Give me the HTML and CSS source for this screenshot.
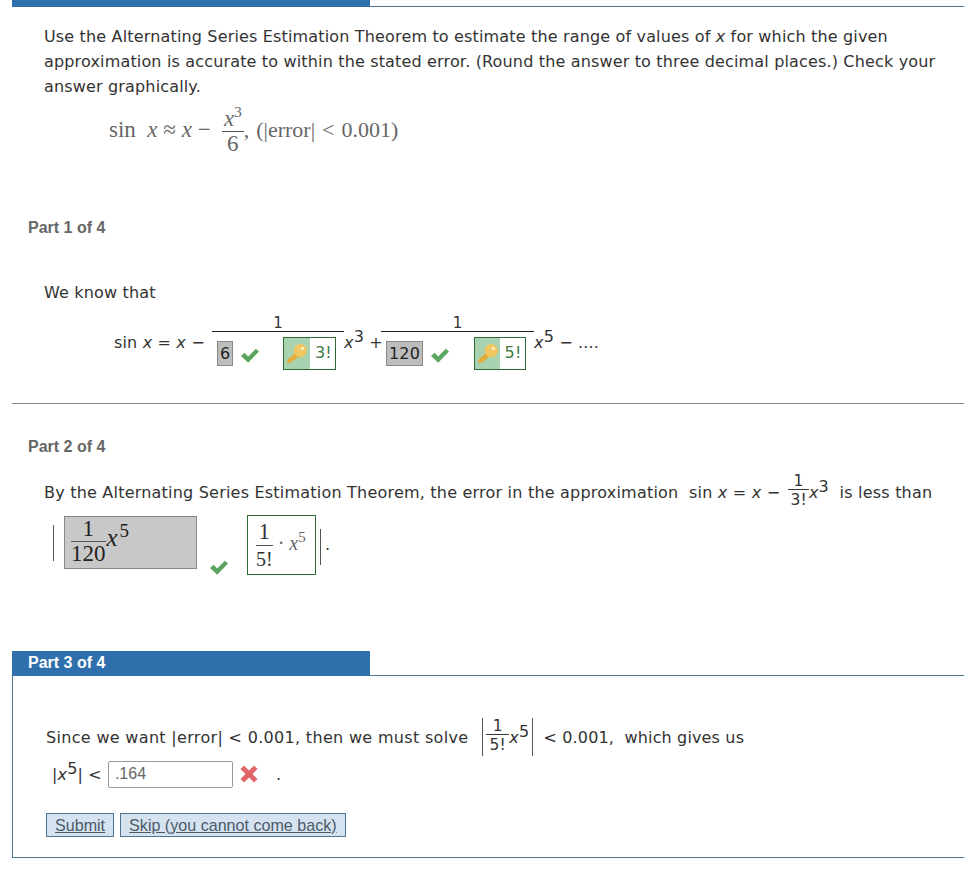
FILE: index.html
```html
<!DOCTYPE html>
<html lang="en">
<head>
<meta charset="utf-8">
<title>Alternating Series Estimation</title>
<link rel="stylesheet" href="styles.css">
</head>
<body>
<svg class="defs" width="0" height="0" aria-hidden="true">
  <defs>
    <symbol id="check" viewBox="0 0 20 16"><path d="M0 8.5 L4 5 L8 9 L16.5 0.5 L20 3.5 L8 16 Z" fill="#5ba55f"/></symbol>
    <symbol id="cross" viewBox="0 0 18 18"><path d="M0.5 4 L4 0.5 L9 5.5 L14 0.5 L17.5 4 L12.5 9 L17.5 14 L14 17.5 L9 12.5 L4 17.5 L0.5 14 L5.5 9 Z" fill="#e0656a"/></symbol>
    <symbol id="key" viewBox="0 0 20 20"><path d="M1 15.5 L9 8 L12.5 11.5 L6 17 L4.5 16.5 L3.5 18.5 L1.5 18.5 Z" fill="#e2ad3f"/><circle cx="13" cy="7" r="6" fill="#efc65f"/><circle cx="15" cy="5" r="1.6" fill="#fbeab5"/></symbol>
  </defs>
</svg>
<main class="page">
  <div class="tab-head slim"><div class="tab tab-slim"></div></div>

  <section class="question">
    <p class="prose">Use the Alternating Series Estimation Theorem to estimate the range of values of <i>x</i> for which the given approximation is accurate to within the stated error. (Round the answer to three decimal places.) Check your answer graphically.</p>
    <div class="tex-line">
      <span class="tex-lead">sin&nbsp; <i>x</i> ≈ <i>x</i> −</span>
      <span class="tex-frac"><span class="tex-num"><i>x</i><sup>3</sup></span><span class="tex-den">6</span></span>
      <span class="tex-tail">, (|error| &lt; 0.001)</span>
    </div>
  </section>

  <section class="part part-one">
    <h2 class="part-label">Part 1 of 4</h2>
    <p class="prose know">We know that</p>
    <div class="series">
      <span class="series-lead">sin <i>x</i> = <i>x</i> −</span>
      <span class="blank-frac first">
        <span class="blank-num">1</span>
        <span class="blank-den">
          <span class="given">6</span>
          <svg class="check"><use href="#check"/></svg>
          <span class="key-box"><span class="key-side"><svg class="key"><use href="#key"/></svg></span><span class="key-val">3!</span></span>
        </span>
      </span>
      <span class="series-term"><i>x</i><sup>3</sup> +</span>
      <span class="blank-frac second">
        <span class="blank-num">1</span>
        <span class="blank-den">
          <span class="given">120</span>
          <svg class="check"><use href="#check"/></svg>
          <span class="key-box"><span class="key-side"><svg class="key"><use href="#key"/></svg></span><span class="key-val">5!</span></span>
        </span>
      </span>
      <span class="series-term"><i>x</i><sup>5</sup> − ....</span>
    </div>
  </section>

  <section class="part part-two">
    <h2 class="part-label">Part 2 of 4</h2>
    <div class="prose error-line">
      <span>By the Alternating Series Estimation Theorem, the error in the approximation&nbsp; sin <i>x</i> = <i>x</i> −</span>
      <span class="mini-frac"><span class="mini-num">1</span><span class="mini-den">3!</span></span><span class="after-frac"><i>x</i><sup>3</sup>&nbsp; is less than</span>
    </div>
    <div class="abs-line">
      <span class="abs-bar"></span>
      <span class="given-tex">
        <span class="tex-frac big"><span class="tex-num">1</span><span class="tex-den">120</span></span><span class="tex-pow"><i>x</i><sup>5</sup></span>
      </span>
      <svg class="check check-low"><use href="#check"/></svg>
      <span class="answer-tex">
        <span class="tex-frac ans"><span class="tex-num">1</span><span class="tex-den">5!</span></span><span class="dot-pow">· <i>x</i><sup>5</sup></span>
      </span>
      <span class="abs-bar end"></span><span class="period">.</span>
    </div>
  </section>

  <div class="tab-head"><div class="tab">Part 3 of 4</div></div>
  <section class="active-part">
    <div class="prose solve-line">
      <span>Since we want |error| &lt; 0.001, then we must solve</span>
      <span class="abs-frac"><span class="mini-frac"><span class="mini-num">1</span><span class="mini-den">5!</span></span><span class="after-frac"><i>x</i><sup>5</sup></span></span>
      <span class="solve-tail">&lt; 0.001,&nbsp; which gives us</span>
    </div>
    <div class="prose input-line">
      <span>|<i>x</i><sup>5</sup>| &lt;</span>
      <input class="answer" type="text" value=".164" aria-label="answer">
      <svg class="cross"><use href="#cross"/></svg>
      <span class="input-dot">.</span>
    </div>
    <div class="actions">
      <button class="btn" type="button">Submit</button>
      <button class="btn" type="button">Skip (you cannot come back)</button>
    </div>
  </section>
</main>
</body>
</html>
```
FILE: styles.css
```css
* { box-sizing: border-box; }
html, body { margin: 0; padding: 0; background: #fff; overflow: hidden; }
body { font-family: "DejaVu Sans", Verdana, sans-serif; font-size: 16px; letter-spacing: 0.16px; color: #333; width: 964px; height: 870px; }
.defs { position: absolute; }
.page { padding-left: 12px; }
p { margin: 0; }

.tab-head { border-bottom: 1px solid #4f7590; height: 25px; }
.tab-head.slim { height: 7px; }
.tab { width: 358px; height: 25px; background: #2f6fab; color: #fff; font: bold 16px/24px "Liberation Sans", Arial, sans-serif; letter-spacing: 0; padding-left: 16px; }
.tab-slim { height: 7px; }

.question { padding: 17px 12px 0 32px; }
.prose { line-height: 25px; }
.tex-line { display: flex; align-items: center; margin: 5px 0 0 65px; font: 23px "Liberation Serif", serif; letter-spacing: 0; color: #666; height: 54px; }
.tex-lead { width: 113px; white-space: pre; word-spacing: 0; margin-top: -2px; }
.tex-tail { white-space: nowrap; font-size: 22px; word-spacing: 1.5px; margin-top: -2px; }
.tex-frac { display: inline-flex; flex-direction: column; align-items: center; vertical-align: middle; }
.tex-num { padding: 0 2px; line-height: 24px; }
.tex-num sup { font-size: 15px; line-height: 0; }
.tex-den { border-top: 1px solid #555; width: 100%; text-align: center; line-height: 24px; }

.part-label { margin: 0; font: bold 16px/20px "Liberation Sans", Arial, sans-serif; letter-spacing: 0; color: #666; padding-left: 16px; }
.part-one { margin-top: 60px; border-bottom: 1px solid #888; height: 186px; }
.know { padding-left: 32px; margin-top: 42px; }
.series { display: flex; align-items: flex-start; margin: 9px 0 0 102px; }
.series-lead { margin-top: 19px; width: 98px; white-space: nowrap; }
.series-term { margin-top: 19px; white-space: nowrap; }
.series sup, .after-frac sup, .input-line sup { font-size: 16px; line-height: 0; }
.blank-frac { display: flex; flex-direction: column; align-items: stretch; }
.blank-frac.first { width: 132px; }
.blank-frac.second { width: 153px; flex: none; }
.series-term:nth-of-type(3) { width: 37px; }
.blank-num { text-align: center; line-height: 18px; height: 18px; border-bottom: 1px solid #222; font-size: 15px; }
.blank-den { display: flex; align-items: flex-start; padding: 5px 0 0 5px; }
.given { margin-top: 4px; height: 25px; line-height: 23px; padding: 0 2px; border: 1px solid #888; background: #bdbdbd; color: #222; min-width: 16px; }
.check { width: 18px; height: 15px; margin-left: 8px; margin-top: 11px; flex: none; }
.key-box { display: flex; width: 53px; height: 33px; margin-left: 24px; border: 1px solid #2e6b34; color: #3f7a45; }
.key-side { width: 26px; background: #a9d3b0; display: flex; align-items: center; justify-content: center; }
.key { width: 22px; height: 22px; }
.key-val { flex: 1; text-align: center; line-height: 30px; padding-left: 1px; }
.second .key-box { width: 52px; margin-left: 25px; }
.second .key-side { width: 25px; }

.part-two { margin-top: 33px; }
.error-line { display: flex; align-items: center; margin: 13px 0 0 32px; height: 44px; white-space: nowrap; letter-spacing: 0.21px; }
.mini-frac { display: inline-flex; flex-direction: column; align-items: center; margin-left: 8px; font-size: 15.5px; vertical-align: middle; }
.mini-num { line-height: 15px; }
.mini-den { line-height: 20px; border-top: 1px solid #333; padding: 0 2px; }
.after-frac { white-space: nowrap; }
.abs-line { display: flex; align-items: flex-start; height: 60px; margin: 1px 0 0 41px; font-family: "Liberation Serif", serif; letter-spacing: 0; }
.abs-bar { width: 1px; height: 36px; background: #555; margin-top: 10px; }
.abs-bar.end { height: 36px; margin: 14px 0 0 4px; }
.given-tex { display: flex; width: 133px; height: 53px; margin: 1px 0 0 10px; padding: 0 0 0 6px; background: #c8c8c8; border: 1px solid #888; font-size: 23px; color: #222; }
.tex-frac.big .tex-num, .tex-frac.big .tex-den { line-height: 24px; }
.tex-pow { font-size: 25px; line-height: 30px; margin: 6px 0 0 1px; }
.tex-pow sup { font-size: 19px; line-height: 0; margin-left: 2px; }
.check-low { width: 18px; height: 15px; margin: 45px 0 0 13px; }
.answer-tex { display: flex; align-items: center; width: 69px; height: 60px; margin-left: 19px; padding-left: 8px; border: 1px solid #2e6b34; font-size: 20px; color: #333; }
.tex-frac.ans .tex-num { font-size: 23px; line-height: 27px; }
.tex-frac.ans .tex-den { line-height: 26px; }
.dot-pow { color: #666; font-size: 20px; margin-left: 5px; margin-top: -4px; white-space: nowrap; }
.dot-pow sup { font-size: 15px; line-height: 0; }
.period { margin: 20px 0 0 4px; font-family: "DejaVu Sans", sans-serif; }

.part-two + .tab-head { margin-top: 76px; }
.active-part { height: 182px; border: 1px solid #4f7590; border-top: 0; border-right: 0; padding: 36px 0 0 32px; }
.solve-line { display: flex; align-items: center; height: 50px; white-space: nowrap; margin-left: 1px; letter-spacing: 0.32px; }
.solve-tail { letter-spacing: 0.15px; }
.abs-frac { display: inline-flex; align-items: center; height: 38px; margin: 0 10px 0 14px; padding: 0 3px 0 0; border-left: 1px solid #555; border-right: 1px solid #555; }
.abs-frac .mini-frac { margin-left: 3px; }
.abs-frac .mini-den { padding: 0 3px; }
.input-line { display: flex; align-items: center; height: 28px; margin: -2px 0 0 7px; }
.answer { width: 125px; height: 27px; margin-left: 6px; padding: 0 6px; border: 1px solid #999; border-radius: 2px; font: 16px "Liberation Sans", Arial, sans-serif; color: #666; background: #fff; }
.cross { width: 18px; height: 18px; margin-left: 7px; }
.input-dot { margin-left: 18px; }
.actions { display: flex; gap: 6px; margin: 25px 0 0 1px; }
.btn { height: 24px; padding: 0 8px; background: #d5e3f1; border: 1px solid #4f7590; color: #4c5a68; font: 16.1px "Liberation Sans", Arial, sans-serif; text-decoration: underline; }
```
